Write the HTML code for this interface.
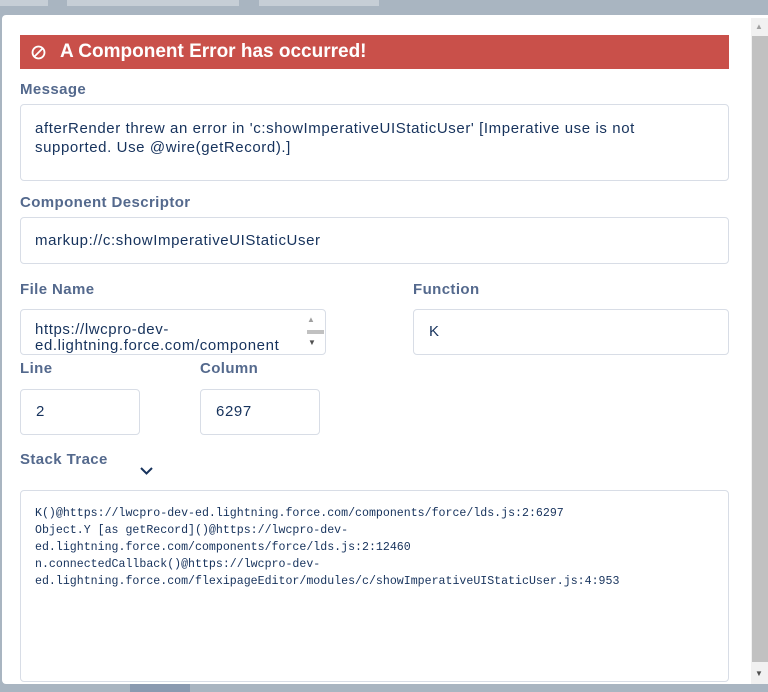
<!DOCTYPE html>
<html><head><style>
body{margin:0;width:768px;height:692px;background:#a9b5c1;position:relative;overflow:hidden;font-family:"Liberation Sans",sans-serif;}
.m{position:absolute;left:2px;top:15px;width:766px;height:669px;background:#fff;border-radius:4px 0 0 4px;}
.a{position:absolute;}
.lbl{position:absolute;font-size:15px;letter-spacing:0.4px;font-weight:bold;color:#54698d;}
.box{position:absolute;border:1px solid #d8dde6;border-radius:4px;background:#fff;box-sizing:border-box;font-size:15px;letter-spacing:0.6px;color:#16325c;}
.mono{font-family:"Liberation Mono",monospace;font-size:11.6px;letter-spacing:0;line-height:17px;color:#16325c;}
</style></head><body>
<div class="a" style="left:0;top:0;width:48px;height:6px;background:#c6ced6"></div>
<div class="a" style="left:67px;top:0;width:172px;height:6px;background:#c6ced6"></div>
<div class="a" style="left:259px;top:0;width:120px;height:6px;background:#c6ced6"></div>
<div class="a" style="left:130px;top:684px;width:60px;height:8px;background:#8a9ab0"></div>
<div class="m"></div>
<div class="a" style="left:751px;top:18px;width:17px;height:666px;background:#f1f1f1"></div>
<div class="a" style="left:752px;top:36px;width:16px;height:626px;background:#c1c1c1"></div>
<div class="a" style="left:755px;top:22px;font-size:8px;color:#a0a0a0">▲</div>
<div class="a" style="left:755px;top:669px;font-size:8px;color:#505050">▼</div>
<div class="a" style="left:20px;top:35px;width:709px;height:34px;background:#c9504a;color:#fff;font-weight:bold;font-size:19px;line-height:34px;">
<svg class="a" style="left:11px;top:10px" width="15" height="15" viewBox="0 0 15 15"><circle cx="7.5" cy="7.5" r="6" fill="none" stroke="#fff" stroke-width="1.8"/><path d="M3.5 11.5L11.5 3.5" stroke="#fff" stroke-width="1.8"/></svg>
<span style="position:absolute;left:40px">A Component Error has occurred!</span></div>
<div class="lbl" style="left:20px;top:81px">Message</div>
<div class="box" style="left:20px;top:104px;width:709px;height:77px;padding:14px 80px 14px 14px;line-height:19px">afterRender threw an error in 'c:showImperativeUIStaticUser' [Imperative use is not supported. Use @wire(getRecord).]</div>
<div class="lbl" style="left:20px;top:194px">Component Descriptor</div>
<div class="box" style="left:20px;top:217px;width:709px;height:47px;padding:0 14px;line-height:45px">markup://c:showImperativeUIStaticUser</div>
<div class="lbl" style="left:20px;top:281px">File Name</div>
<div class="box" style="left:20px;top:309px;width:306px;height:46px;padding:12px 14px;line-height:16px;overflow:hidden">https://lwcpro-dev-<br>ed.lightning.force.com/component</div>
<div class="a" style="left:307px;top:315px;font-size:8px;color:#a0a0a0">▲</div>
<div class="a" style="left:307px;top:330px;width:17px;height:4px;background:#c1c1c1"></div>
<div class="a" style="left:308px;top:338px;font-size:8px;color:#505050">▼</div>
<div class="lbl" style="left:413px;top:281px">Function</div>
<div class="box" style="left:413px;top:309px;width:316px;height:46px;padding:0 15px;line-height:44px">K</div>
<div class="lbl" style="left:20px;top:360px">Line</div>
<div class="box" style="left:20px;top:389px;width:120px;height:46px;padding:0 15px;line-height:44px">2</div>
<div class="lbl" style="left:200px;top:360px">Column</div>
<div class="box" style="left:200px;top:389px;width:120px;height:46px;padding:0 15px;line-height:44px">6297</div>
<div class="lbl" style="left:20px;top:451px">Stack Trace</div>
<svg class="a" style="left:139px;top:466px" width="15" height="10" viewBox="0 0 15 10"><path d="M2 2L7.5 7.5L13 2" fill="none" stroke="#16325c" stroke-width="2"/></svg>
<div class="box mono" style="left:20px;top:490px;width:709px;height:192px;padding:14px 14px">K()@https://lwcpro-dev-ed.lightning.force.com/components/force/lds.js:2:6297<br>Object.Y [as getRecord]()@https://lwcpro-dev-<br>ed.lightning.force.com/components/force/lds.js:2:12460<br>n.connectedCallback()@https://lwcpro-dev-<br>ed.lightning.force.com/flexipageEditor/modules/c/showImperativeUIStaticUser.js:4:953</div>
</body></html>
